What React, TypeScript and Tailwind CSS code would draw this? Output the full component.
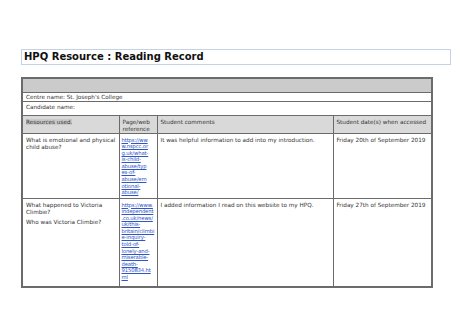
import React from 'react';

const font = { fontFamily: '"DejaVu Sans", Verdana, sans-serif' };

const Link: React.FC<{ lines: string[] }> = ({ lines }) => (
  <div className="text-[#2f55c8] underline whitespace-nowrap tracking-[-0.15px]">
    {lines.map((l, i) => (
      <div key={i}>{l}</div>
    ))}
  </div>
);

export default function App() {
  const cell = 'border border-[#6b6b6b] align-top px-[3px] pt-[3px] text-[5.7px] leading-[7px] text-[#333] overflow-hidden';
  const linkCell = 'border border-[#6b6b6b] align-top px-[2px] pt-[3px] text-[5.3px] leading-[6.6px] overflow-hidden';

  return (
    <div className="w-[474px] h-[334px] bg-white relative" style={font}>
      <div className="pt-[49px] pl-[21px]">
        {/* Title */}
        <div className="w-[430px] h-[16px] border border-[#c3d3e3] flex items-center pl-[2px]">
          <span className="text-[10px] font-bold text-[#111] leading-none">HPQ Resource : Reading Record</span>
        </div>

        {/* Record table */}
        <table className="mt-[12px] border-collapse border-2 border-[#6b6b6b] table-fixed w-[410px]">
          <colgroup>
            <col className="w-[97px]" />
            <col className="w-[38px]" />
            <col className="w-[176px]" />
            <col className="w-[99px]" />
          </colgroup>
          <tbody>
            <tr className="h-[14px] bg-[#cbcbcb]">
              <td colSpan={4} className="border border-[#6b6b6b]" />
            </tr>
            <tr className="h-[9px]">
              <td colSpan={4} className={`${cell} !pt-[1px]`}>Centre name: St. Joseph&apos;s College</td>
            </tr>
            <tr className="h-[14px]">
              <td colSpan={4} className={`${cell} !pt-[2px]`}>Candidate name:</td>
            </tr>
            <tr className="h-[18px] bg-[#d9d9d9]">
              <td className={cell}><span className="bg-[#c8c8c8]">Resources used.</span></td>
              <td className={cell}>Page/web<br />reference</td>
              <td className={cell}>Student comments</td>
              <td className={`${cell} whitespace-nowrap`}>Student date(s) when accessed</td>
            </tr>
            <tr className="h-[65px]">
              <td className={cell}>What is emotional and physical<br />child abuse?</td>
              <td className={linkCell}>
                <Link lines={['https://ww', 'w.nspcc.or', 'g.uk/what-', 'is-child-', 'abuse/typ', 'es-of-', 'abuse/em', 'otional-', 'abuse/']} />
              </td>
              <td className={cell}>It was helpful information to add into my introduction.</td>
              <td className={`${cell} whitespace-nowrap`}>Friday 20th of September 2019</td>
            </tr>
            <tr className="h-[89px]">
              <td className={cell}>
                What happened to Victoria<br />Climbie?
                <div className="mt-[3px]">Who was Victoria Climbie?</div>
              </td>
              <td className={linkCell}>
                <Link lines={['https://www.', 'independent', '.co.uk/news/', 'uk/this-', 'britain/climbi', 'e-inquiry-', 'told-of-', 'lonely-and-', 'miserable-', 'death-', '9150834.ht', 'ml']} />
              </td>
              <td className={cell}>I added information I read on this website to my HPQ.</td>
              <td className={`${cell} whitespace-nowrap`}>Friday 27th of September 2019</td>
            </tr>
          </tbody>
        </table>
      </div>
    </div>
  );
}
